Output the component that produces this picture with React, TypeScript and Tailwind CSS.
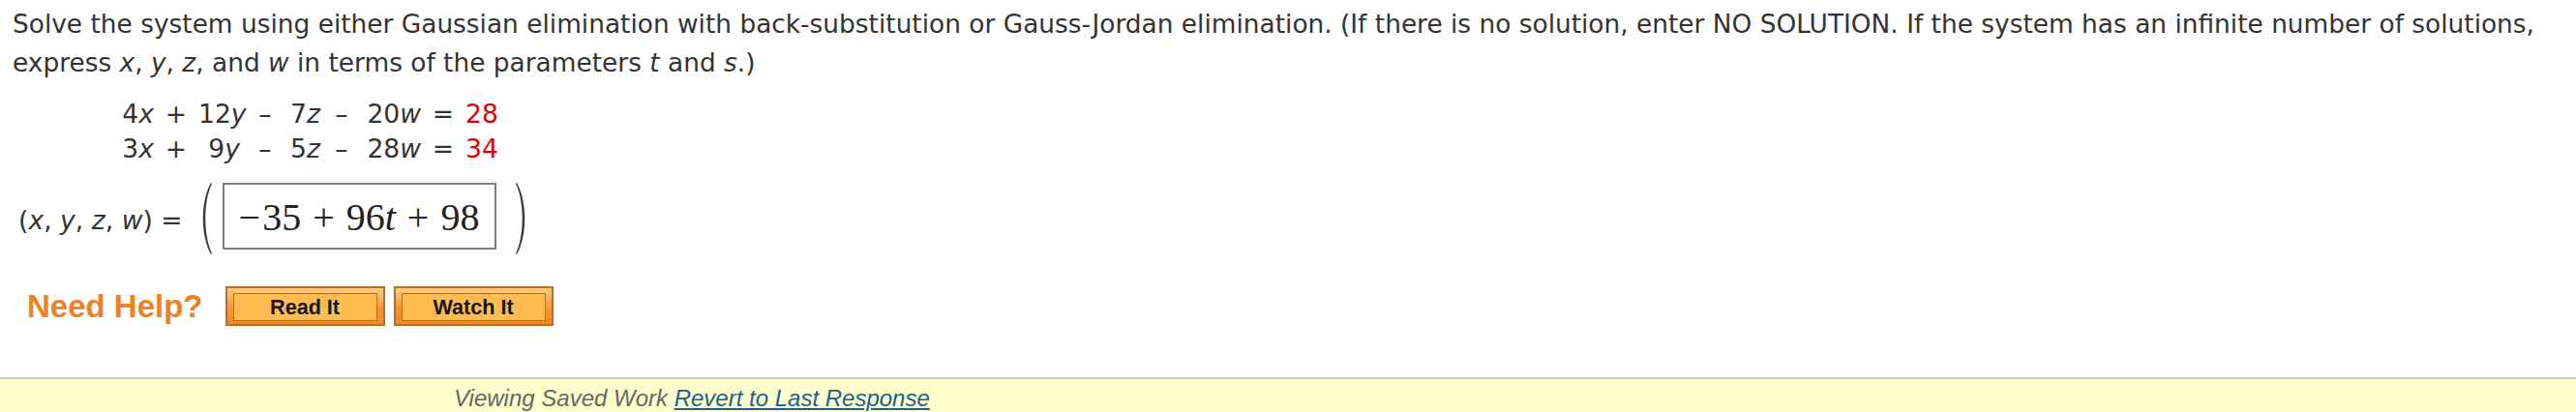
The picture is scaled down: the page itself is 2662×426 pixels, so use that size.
import React from "react";

const Paren = ({ right = false }: { right?: boolean }) => (
  <svg width="16" height="76" viewBox="0 0 16 76" className="shrink-0">
    <path
      d={
        right
          ? "M2 1 C13 20 13 56 2 75 L1 74 C10 56 10 20 1 2 Z"
          : "M14 1 C3 20 3 56 14 75 L15 74 C6 56 6 20 15 2 Z"
      }
      fill="#3a3a3a"
    />
  </svg>
);

const I = ({ children }: { children: React.ReactNode }) => <i className="italic">{children}</i>;

const HelpButton = ({ label, w }: { label: string; w: string }) => (
  <div
    className={`${w} h-[41px] border-2 border-[#c06b20] bg-gradient-to-b from-[#ffcf85] via-[#f59a38] to-[#ec8a26] px-[6px] pt-[5px] pb-[3px]`}
  >
    <div className="h-full border border-[#a9712f] bg-[#ffbb4f] flex items-center justify-center font-['Liberation_Sans',Arial,sans-serif] font-bold text-[21.6px] text-[#161616] leading-none">
      {label}
    </div>
  </div>
);

export default function App() {
  return (
    <div className="w-[2662px] h-[426px] bg-white overflow-hidden flex flex-col font-['DejaVu_Sans',Verdana,sans-serif] text-[#333333]">
      <div className="pl-[13px] pt-[5px] text-[26.4px] leading-[40px]">
        <div className="whitespace-nowrap">
          Solve the system using either Gaussian elimination with back-substitution or Gauss-Jordan elimination. (If there is no solution, enter NO SOLUTION. If the system has an infinite number of solutions,
        </div>
        <div className="whitespace-nowrap">
          express <I>x</I>, <I>y</I>, <I>z</I>, and <I>w</I> in terms of the parameters <I>t</I> and <I>s</I>.)
        </div>
      </div>

      <div className="ml-[126px] mt-[15px] grid grid-cols-[33px_46px_43px_52px_31px_44px_60px_46px_auto] text-[26.6px] leading-[36px] whitespace-nowrap">
        <span className="text-right">4<I>x</I></span>
        <span className="text-center">+</span>
        <span className="text-right">12<I>y</I></span>
        <span className="text-center">–</span>
        <span className="text-right">7<I>z</I></span>
        <span className="text-center">–</span>
        <span className="text-right">20<I>w</I></span>
        <span className="text-center">=</span>
        <span className="text-left text-[#e00000]">28</span>

        <span className="text-right">3<I>x</I></span>
        <span className="text-center">+</span>
        <span className="text-right">9<I>y</I></span>
        <span className="text-center">–</span>
        <span className="text-right">5<I>z</I></span>
        <span className="text-center">–</span>
        <span className="text-right">28<I>w</I></span>
        <span className="text-center">=</span>
        <span className="text-left text-[#e00000]">34</span>
      </div>

      <div className="ml-[19px] mt-[16px] flex items-start">
        <div className="mt-[20px] text-[26.6px] leading-[40px] whitespace-nowrap">
          (<I>x</I>, <I>y</I>, <I>z</I>, <I>w</I>) =
        </div>
        <div className="ml-[15px]">
          <Paren />
        </div>
        <div className="ml-[10px] mt-[1px] h-[69px] w-[283px] border-2 border-[#7f7f7f] flex items-center justify-center font-['Liberation_Serif','Times_New_Roman',serif] text-[40px] text-[#222] whitespace-nowrap">
          <span className="pt-[2px]">
            <span className="mr-[2px]">−</span>35<span className="mx-[12px]">+</span>96<I>t</I>
            <span className="mx-[12px]">+</span>98
          </span>
        </div>
        <div className="ml-[19px]">
          <Paren right />
        </div>
      </div>

      <div className="ml-[28px] mt-[32px] flex items-center">
        <span className="font-['Liberation_Sans',Arial,sans-serif] font-bold text-[33px] leading-none text-[#ee8222]">
          Need Help?
        </span>
        <div className="ml-[23px] flex gap-[9px]">
          <HelpButton label="Read It" w="w-[165px]" />
          <HelpButton label="Watch It" w="w-[165px]" />
        </div>
      </div>

      <div className="mt-[53px] flex-1 border-t-2 border-[#cccccc] bg-[#ffffcc] pl-[469px] pt-[6px] font-['Liberation_Sans',Arial,sans-serif] italic text-[24px] leading-[28px] whitespace-nowrap">
        <span className="text-[#666666]">Viewing Saved Work </span>
        <a className="text-[#17609a] underline">Revert to Last Response</a>
      </div>
    </div>
  );
}
